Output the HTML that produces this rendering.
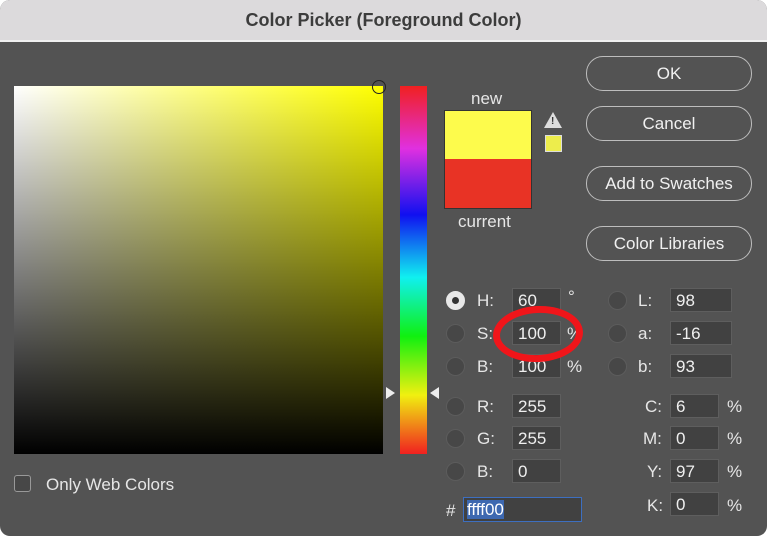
<!DOCTYPE html><html><head><style>
body{margin:0;width:768px;height:538px;background:#fff;font-family:"Liberation Sans",sans-serif;position:relative;overflow:hidden}
.win{position:absolute;left:0;top:0;width:767px;height:536px;background:#535353;border-radius:10px;overflow:hidden}
.title{position:absolute;left:0;top:0;width:100%;height:40px;background:#dcdadc;border-bottom:2px solid #f0f0f0;text-align:center;line-height:40px;font-weight:bold;font-size:18px;color:#3c3c3c}
.a{position:absolute}
.t{position:absolute;color:#e6e6e6;font-size:17px}
.btn{position:absolute;left:586px;width:164px;height:33px;border:1.5px solid #bdbdbd;border-radius:17px;color:#f0f0f0;font-size:17px;text-align:center;line-height:33px}
.f{position:absolute;background:#414141;border:1px solid #5e5e5e;height:24px;color:#efefef;font-size:17px;line-height:24px;padding-left:5px;box-sizing:border-box}
.r{position:absolute;width:17px;height:17px;border-radius:50%;background:#474747;border:1px solid #5c5c5c}
</style></head><body><div class="win">
<div class="title">Color Picker (Foreground Color)</div>
<div class="a" style="left:14px;top:86px;width:369px;height:368px;background:linear-gradient(to bottom,rgba(0,0,0,0),#000),linear-gradient(to right,#fff,#ffff00)"></div>
<div class="a" style="left:372px;top:80px;width:12px;height:12px;border:1.5px solid #222;border-radius:50%"></div>
<div class="a" style="left:400px;top:86px;width:27px;height:368px;background:linear-gradient(to bottom,#f02020,#e030e0 17%,#1010f0 35%,#10f0f0 52%,#10f010 68%,#f0f010 84%,#f02020)"></div>
<div class="a" style="left:386px;top:387px;width:0;height:0;border-top:6px solid transparent;border-bottom:6px solid transparent;border-left:9px solid #eee"></div>
<div class="a" style="left:430px;top:387px;width:0;height:0;border-top:6px solid transparent;border-bottom:6px solid transparent;border-right:9px solid #eee"></div>
<div class="t" style="left:471px;top:89px">new</div>
<div class="a" style="left:444px;top:110px;width:86px;height:97px;border:1px solid #333"><div style="height:48px;background:#fdfb4c"></div><div style="height:49px;background:#e83325"></div></div>
<div class="t" style="left:458px;top:212px">current</div>
<div class="a" style="left:544px;top:112px;width:0;height:0;border-left:9px solid transparent;border-right:9px solid transparent;border-bottom:16px solid #ddd"></div>
<div class="a" style="left:551px;top:116px;color:#333;font-size:10px;font-weight:bold">!</div>
<div class="a" style="left:545px;top:135px;width:15px;height:15px;background:#eded4c;border:1.5px solid #ddd"></div>
<div class="btn" style="top:56px">OK</div>
<div class="btn" style="top:106px">Cancel</div>
<div class="btn" style="top:166px">Add to Swatches</div>
<div class="btn" style="top:226px">Color Libraries</div>
<div class="r" style="left:446px;top:291px;background:#e8e8e8;border-color:#e8e8e8"></div><div class="a" style="left:452px;top:297px;width:7px;height:7px;border-radius:50%;background:#333"></div>
<div class="r" style="left:446px;top:324px"></div><div class="r" style="left:446px;top:357px"></div>
<div class="r" style="left:446px;top:397px"></div><div class="r" style="left:446px;top:429px"></div><div class="r" style="left:446px;top:462px"></div>
<div class="r" style="left:608px;top:291px"></div><div class="r" style="left:608px;top:324px"></div><div class="r" style="left:608px;top:357px"></div>
<div class="t" style="left:477px;top:291px">H:</div><div class="t" style="left:477px;top:324px">S:</div><div class="t" style="left:477px;top:357px">B:</div>
<div class="t" style="left:477px;top:397px">R:</div><div class="t" style="left:477px;top:429px">G:</div><div class="t" style="left:477px;top:462px">B:</div>
<div class="f" style="left:512px;top:288px;width:49px">60</div><div class="t" style="left:568px;top:287px">°</div>
<div class="f" style="left:512px;top:321px;width:49px">100</div><div class="t" style="left:567px;top:324px">%</div>
<div class="f" style="left:512px;top:354px;width:49px">100</div><div class="t" style="left:567px;top:357px">%</div>
<div class="f" style="left:512px;top:394px;width:49px">255</div>
<div class="f" style="left:512px;top:426px;width:49px">255</div>
<div class="f" style="left:512px;top:459px;width:49px">0</div>
<div class="t" style="left:638px;top:291px">L:</div><div class="t" style="left:638px;top:324px">a:</div><div class="t" style="left:638px;top:357px">b:</div>
<div class="f" style="left:670px;top:288px;width:62px">98</div><div class="f" style="left:670px;top:321px;width:62px">-16</div><div class="f" style="left:670px;top:354px;width:62px">93</div>
<div class="t" style="left:645px;top:397px">C:</div><div class="t" style="left:643px;top:429px">M:</div><div class="t" style="left:647px;top:462px">Y:</div><div class="t" style="left:647px;top:496px">K:</div>
<div class="f" style="left:670px;top:394px;width:49px">6</div><div class="f" style="left:670px;top:426px;width:49px">0</div><div class="f" style="left:670px;top:459px;width:49px">97</div><div class="f" style="left:670px;top:492px;width:49px">0</div>
<div class="t" style="left:727px;top:397px">%</div><div class="t" style="left:727px;top:429px">%</div><div class="t" style="left:727px;top:462px">%</div><div class="t" style="left:727px;top:496px">%</div>
<div class="t" style="left:446px;top:501px">#</div>
<div class="f" style="left:463px;top:497px;width:119px;height:25px;border:1.5px solid #3d6fc0;padding-left:3px"><span style="background:#3d68b0;color:#fff">ffff00</span></div>
<div class="a" style="left:14px;top:475px;width:15px;height:15px;border:1px solid #999;border-radius:3px;background:#474747"></div>
<div class="t" style="left:46px;top:475px;font-size:17px">Only Web Colors</div>
<div class="a" style="left:493px;top:306px;width:90px;height:56px;border:7px solid #f0151a;border-radius:50%;box-sizing:border-box;transform:rotate(-3deg)"></div>
</div></body></html>
